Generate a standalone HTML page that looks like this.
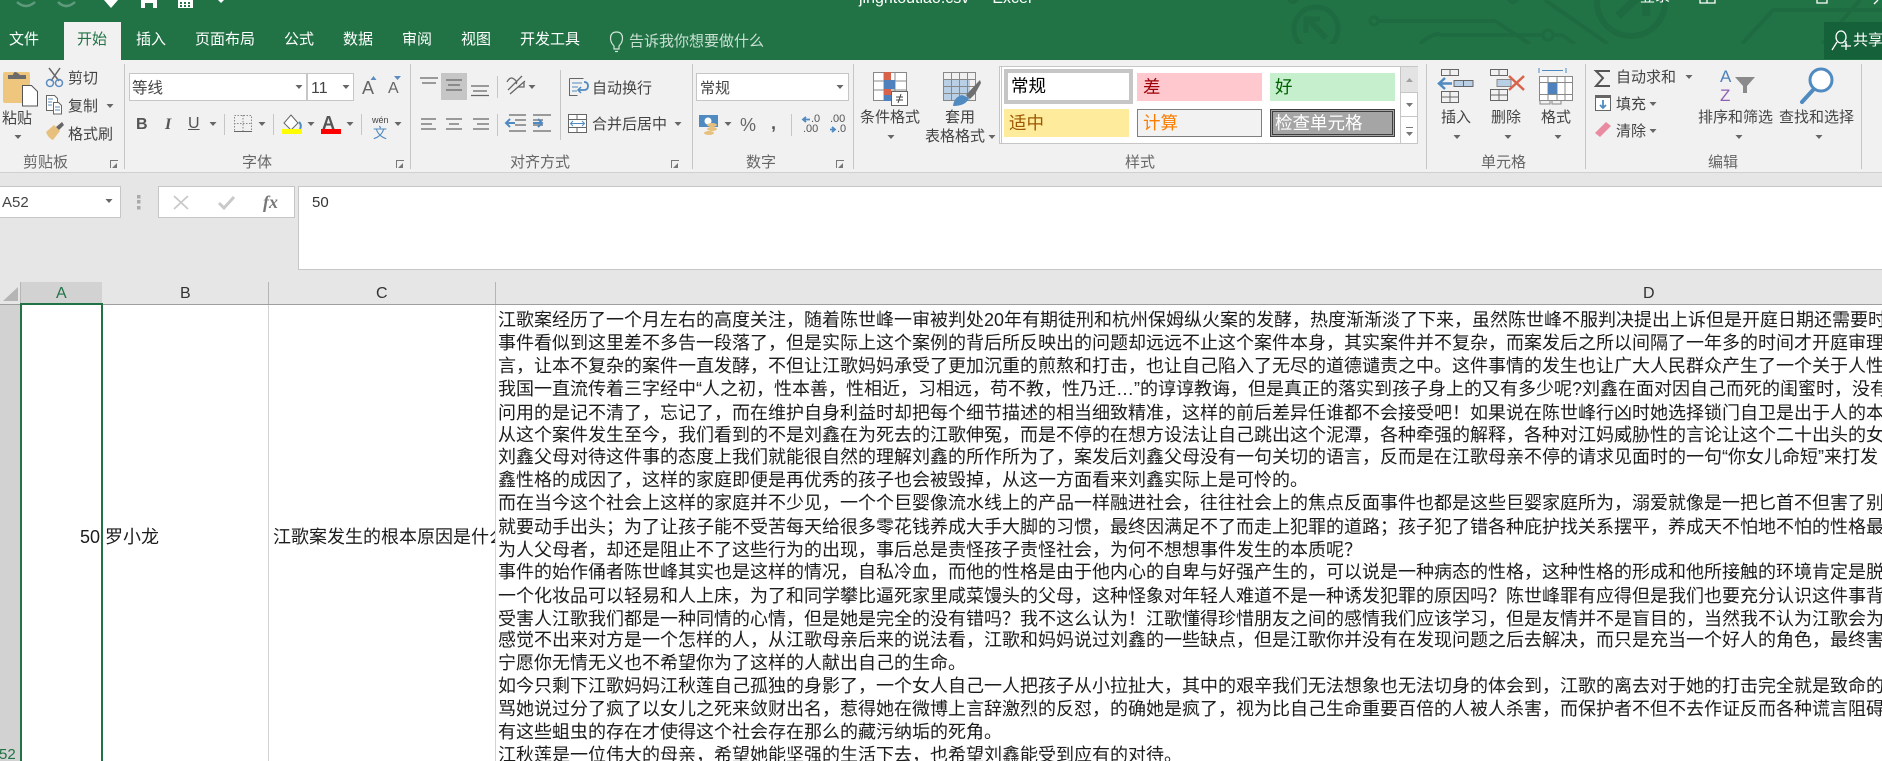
<!DOCTYPE html>
<html lang="zh"><head><meta charset="utf-8"><title>jingritoutiao.csv - Excel</title>
<style>
html,body{margin:0;padding:0;width:1882px;height:761px;overflow:hidden;background:#fff}
body{position:relative;font-family:"Liberation Sans","Noto Sans CJK SC",sans-serif}
div{position:absolute;box-sizing:border-box}
.t{white-space:nowrap;line-height:20px;height:20px;font-size:15px;color:#444}
.g{color:#666}
.tab{color:#fff;top:30px}
.l{left:498px;font-size:18px;line-height:23px;height:23px;white-space:nowrap;color:#1c1c1c;width:1384px;overflow:hidden}
.c{font-family:"Noto Sans CJK TC",sans-serif}
svg{position:absolute;left:0;top:0}
</style></head><body>
<div style="left:0;top:0;width:1882px;height:60px;background:#217346"></div>
<div style="left:64px;top:22px;width:57px;height:38px;background:#f1f1f1"></div>
<div style="left:0;top:60px;width:1882px;height:113px;background:#f1f1f1;border-bottom:1px solid #d0d0d0"></div>
<div style="left:0;top:173px;width:1882px;height:109px;background:#e6e6e6"></div>
<div style="left:0;top:282px;width:1882px;height:22px;background:#e6e6e6"></div>
<div style="left:21px;top:282px;width:81px;height:22px;background:#d2d2d2"></div>
<div style="left:0;top:305px;width:20px;height:456px;background:#d2d2d2"></div>
<div style="left:0;top:304px;width:1882px;height:1px;background:#9e9e9e"></div>

<div style="left:0;top:186px;width:121px;height:32px;background:#fff;border:1px solid #c6c6c6;border-left:0"></div>
<div style="left:158px;top:186px;width:137px;height:32px;background:#fff;border:1px solid #c6c6c6"></div>
<div style="left:298px;top:186px;width:1584px;height:84px;background:#fff;border:1px solid #c6c6c6;border-right:0"></div>

<div style="left:129px;top:73px;width:178px;height:28px;background:#fff;border:1px solid #c6c6c6"></div>
<div style="left:307px;top:73px;width:47px;height:28px;background:#fff;border:1px solid #c6c6c6"></div>
<div style="left:441px;top:73px;width:26px;height:27px;background:#c6c6c6"></div>
<div style="left:696px;top:73px;width:153px;height:28px;background:#fff;border:1px solid #c6c6c6"></div>

<div style="left:999px;top:66px;width:402px;height:78px;background:#fff;border:1px solid #c6c6c6"></div>
<div style="left:1001px;top:66px;width:417px;height:78px;border:1px solid #c6c6c6"></div>
<div style="left:1401px;top:67px;width:17px;height:25px;background:#e3e3e3"></div>
<div style="left:1401px;top:92px;width:17px;height:1px;background:#c6c6c6"></div>
<div style="left:1401px;top:116px;width:17px;height:1px;background:#c6c6c6"></div>
<div style="left:1401px;top:93px;width:16px;height:23px;background:#fff"></div>
<div style="left:1401px;top:117px;width:16px;height:26px;background:#fff"></div>

<div class="t" style="left:1004px;top:69px;width:129px;height:35px;background:#fff;border:4px solid #c6c6c6;font-size:17.5px;color:#000;line-height:27px;padding-left:3px">常规</div>
<div class="t" style="left:1137px;top:73px;width:125px;height:28px;background:#ffc7ce;font-size:17.5px;color:#9c0006;line-height:28px;padding-left:6px">差</div>
<div class="t" style="left:1270px;top:73px;width:125px;height:28px;background:#c6efce;font-size:17.5px;color:#006100;line-height:28px;padding-left:5px">好</div>
<div class="t" style="left:1004px;top:109px;width:125px;height:28px;background:#ffeb9c;font-size:17.5px;color:#9c5700;line-height:28px;padding-left:5px">适中</div>
<div class="t" style="left:1137px;top:109px;width:125px;height:28px;background:#f2f2f2;border:1px solid #7f7f7f;font-size:17.5px;color:#fa7d00;line-height:26px;padding-left:5px">计算</div>
<div class="t" style="left:1270px;top:109px;width:125px;height:28px;background:#a5a5a5;border:3px double #3f3f3f;font-size:17.5px;color:#fff;line-height:22px;padding-left:2px">检查单元格</div>

<svg width="1882" height="761" viewBox="0 0 1882 761" fill="none">
<!-- title bar pattern -->
<g stroke="#1e6b41" stroke-width="5" fill="none">
<circle cx="1316" cy="29" r="22"/>
<path d="M1309 20 L1326 38" stroke-width="6"/><path d="M1306 33 V19 H1320" stroke-width="5"/>
<circle cx="1374" cy="21" r="4" stroke-width="3"/><path d="M1378 21 H1495 L1530 44" stroke-width="4"/>
<path d="M1420 44 Q1430 34 1440 34" stroke-width="4"/>
<path d="M1440 35 H1543 M1553 35 H1562 L1575 44" stroke-width="3.5"/><circle cx="1548" cy="35" r="5" stroke-width="3"/>
<circle cx="1631" cy="2" r="34" stroke-width="6"/>
<path d="M1545 0 L1608 44" stroke-width="4"/><path d="M1618 16 L1648 -12" stroke-width="8"/><path d="M1646 16 V0" stroke-width="8"/>
<path d="M1742 44 L1773 10 H1882" stroke-width="4"/><path d="M1822 44 L1860 0" stroke-width="4"/>
<circle cx="1293" cy="-2" r="6" fill="#1e6b41" stroke="none"/><circle cx="1513" cy="-2" r="6" fill="#1e6b41" stroke="none"/>
</g>
<rect x="1000" y="44" width="824" height="16" fill="#217346"/>
<!-- QAT cut-off icons -->
<g>
<path d="M17 2 Q26 10 35 2" stroke="#5f9a7c" stroke-width="2.5"/>
<path d="M58 2 Q66 10 75 2" stroke="#5f9a7c" stroke-width="2.5"/>
<path d="M104 0 H118 L111 8z" fill="#fff"/>
<path d="M141 0 H157 V8 H141z" fill="#fff"/><rect x="145" y="3" width="8" height="5" fill="#217346"/>
<path d="M178 0 H193 V8 H178z" fill="#fff"/><path d="M180 2 h2 v2 h-2z M184 2 h2 v2 h-2z M188 2 h2 v2 h-2z M180 5 h2 v2 h-2z M184 5 h2 v2 h-2z M188 5 h2 v2 h-2z" fill="#217346"/>
<path d="M218 0 h6 l-3 3z" fill="#fff"/>
<path d="M1700 0 V3 H1715 V0 M1707 0 V3" stroke="#fff" stroke-width="1.3"/>
<path d="M1817 0 V3 H1827 V0" stroke="#fff" stroke-width="1.3"/>
<path d="M1874 4 L1878 0" stroke="#fff" stroke-width="1.3"/>
</g>
<!-- lightbulb -->
<g stroke="#d5e6dc" stroke-width="1.2"><path d="M614 46 C609 41 609 32 616.500 32 C624 32 624 41 619 46 V49 H614z"/><path d="M615 51.500 H618"/></g>
<!-- share icon -->
<rect x="1824" y="22" width="58" height="37" fill="#15613a"/>
<g stroke="#fff" stroke-width="1.3"><ellipse cx="1841" cy="37" rx="5" ry="6"/><path d="M1837 42 L1832 50 M1845 43 L1847 45 M1841 46 H1851 M1846 41 V50"/></g>
<!-- separators -->
<path d="M124.500 64V169M410.500 64V169M692.500 64V169M853.500 64V169M1426.500 64V169M1585.500 64V169M1861.500 64V169" stroke="#c6c6c6"/>
<path d="M224.500 114V135M273.500 114V135M361.500 114V135M497.500 76V98M497.500 114V136M560.500 70V140M791.500 114V136" stroke="#c6c6c6"/>
<!-- dropdown arrows -->
<path fill="#666" d="M14.500 135h7l-3.500 4zM106.500 104h7l-3.500 4zM295.500 85h7l-3.500 4zM342.500 85h7l-3.500 4zM209.500 122h7l-3.500 4zM258.500 122h7l-3.500 4zM307.500 122h7l-3.500 4zM346.500 122h7l-3.500 4zM394.500 122h7l-3.500 4zM528.500 85h7l-3.500 4zM674.500 122h7l-3.500 4zM836.500 85h7l-3.500 4zM724.500 122h7l-3.500 4zM887.500 135h7l-3.500 4zM988.500 135h7l-3.500 4zM1453.500 135h7l-3.500 4zM1504.500 135h7l-3.500 4zM1554.500 135h7l-3.500 4zM1685.500 75h7l-3.500 4zM1649.500 102h7l-3.500 4zM1649.500 129h7l-3.500 4zM1735.500 135h7l-3.500 4zM1815.500 135h7l-3.500 4zM105.500 199h7l-3.500 4z"/>
<path fill="#a0a0a0" d="M1406 82h7l-3.500-4z"/><path fill="#777" d="M1406 103h7l-3.500 4z"/><path fill="#777" d="M1406 132h7l-3.500 4zM1406 127h7v1h-7z"/>
<!-- launchers -->
<g stroke="#777"><path d="M110.500 168V160.500H118M396.500 168V160.500H404M671.500 168V160.500H679M836.500 168V160.500H844"/><path fill="#777" stroke="none" d="M117 168h-5l5-5z M403 168h-5l5-5z M678 168h-5l5-5z M843 168h-5l5-5z"/></g>
<!-- paste -->
<rect x="3" y="72" width="27" height="31" rx="2" fill="#efc67d"/>
<path d="M8 75 h5 q1-6 7 0 h6 v4 h-18z" fill="#6b6b6b"/>
<path d="M22.500 85.500 h9 l6 6 v14.500 h-15z" fill="#fff" stroke="#555"/>
<!-- scissors -->
<g stroke="#666" stroke-width="1.5"><path d="M49 68 L59 81 M60 68 L51 81"/></g>
<g stroke="#5b8bbf" stroke-width="1.5"><circle cx="50" cy="83" r="3.500"/><circle cx="59" cy="83" r="3.500"/></g>
<!-- copy -->
<g stroke="#666"><path d="M46.500 95.500h8l3 3v4h-4v8h-7z" fill="#fff"/><path d="M53.500 102.500h5l3 3v8.500h-8z" fill="#fff"/></g>
<path d="M48 99h5M48 102h4M48 105h4M55 107h5M55 110h5" stroke="#5b8bbf"/>
<!-- painter -->
<path d="M46 132 L54 125 L60 131 L53 140 Q48 138 46 132z" fill="#e8c07d"/><path d="M56 127 L62 122 L64 125 L59 130z" fill="#666"/>
<!-- font grow/shrink -->
<path d="M373.500 76 l3 4 h-6z" fill="#5b8bbf"/><path d="M394 76 h7 l-3.500 4z" fill="#5b8bbf"/>
<!-- borders -->
<path d="M234.500 115.500h17v16h-17zM243 115v17M234 123.500h18" stroke="#888" stroke-dasharray="1.500 1.500"/>
<path d="M234 131.500h18" stroke="#666"/>
<!-- fill colour -->
<path d="M291 115 l7 8 -7 7 -7-7z" fill="#fff" stroke="#666"/><path d="M299 122 q3 3 1 7" stroke="#4f8ac0" stroke-width="2"/>
<rect x="282" y="129" width="20" height="5" fill="#ff0"/>
<rect x="321" y="129" width="20" height="5" fill="#f00"/>
<!-- alignment -->
<g stroke="#666" stroke-width="1.200"><path d="M420 78h18M422 83h14M446 80h16M448 85h12M446 90h16M471 86h18M473 91h14M471 95.500h18"/>
<path d="M421 119h15M421 124h11M421 129h15M446 119h16M449 124h10M446 129h16M473 119h16M477 124h12M473 129h16"/>
<path d="M509 115h17M515 120h11M515 125h11M509 131h17M533 115h18M533 120h10M533 125h10M533 131h18"/></g>
<path d="M515 123h-8M510 119l-4 4 4 4M533 123h8M538 119l4 4-4 4" stroke="#4f8ac0" stroke-width="2"/>
<!-- orientation -->
<g stroke="#666" stroke-width="1.300"><path d="M508 90 L522 76M510 94 L525 81 M518 87 h6 v-5"/><path d="M507 82 q3-6 7-3 t2 5" /></g>
<!-- wrap -->
<g><path d="M569.500 78.500h14M569.500 78.500v17h8" stroke="#666"/><path d="M572 83h10M572 87h6M572 91h5" stroke="#4f8ac0"/><path d="M579 90h5q4 0 4-4t-4-4" stroke="#4f8ac0" stroke-width="1.800"/><path d="M581 87l-3 3 3 3" stroke="#4f8ac0" stroke-width="1.500"/></g>
<!-- merge -->
<g stroke="#666"><rect x="568.500" y="114.500" width="18" height="18" fill="#fff"/><path d="M568 119.500h18M568 127.500h18M577 115v4M577 128v4"/></g>
<path d="M571 123.500h13M573 121l-2.500 2.500 2.500 2.500M582 121l2.500 2.500-2.500 2.500" stroke="#4f8ac0"/>
<!-- currency -->
<rect x="699" y="115" width="19" height="12" fill="#4f8ac0"/><circle cx="708" cy="121" r="3.500" fill="#fff"/>
<g fill="#e8c07d"><ellipse cx="712" cy="125" rx="5" ry="2"/><ellipse cx="712" cy="129" rx="5" ry="2"/><ellipse cx="709" cy="133" rx="5" ry="2"/></g>
<path d="M810 119.500h-6M806 117l-3 2.500 3 2.500M830 129.500h5M832 127l3 2.500-3 2.500" stroke="#4f8ac0" stroke-width="1.800"/>
<!-- conditional -->
<g stroke="#888"><rect x="873.500" y="72.500" width="33" height="28" fill="#fff"/><path d="M884 72v28M895 72v28M873 81h34M873 90h34"/></g>
<rect x="884" y="72" width="7" height="9" fill="#d9634a"/><rect x="884" y="80" width="11" height="9" fill="#4f81bd"/><rect x="884" y="89" width="7" height="7" fill="#d9634a"/><rect x="884" y="95" width="7" height="6" fill="#4f81bd"/>
<rect x="891.500" y="91.500" width="16" height="14" fill="#fff" stroke="#666"/><path d="M896 97h7M896 100h7M901 94l-3 9" stroke="#444"/>
<!-- table format -->
<rect x="943" y="80" width="27" height="21" fill="#b8cfe6"/>
<g stroke="#888"><rect x="943.500" y="72.500" width="32" height="28"/><path d="M951.500 72v28M959.500 72v28M967.500 72v28M943 79.500h33M943 86.500h33M943 93.500h33"/></g>
<path d="M966 95 L978 82 L980 80 L981 83 L975 94 L970 99z" fill="#6f6f6f"/><path d="M953 106 Q954 97 962 95 L969 98 Q966 106 953 106z" fill="#4f8ac0"/>
<!-- insert -->
<g stroke="#666"><path d="M1441.500 69.500h17v6h-17zM1450 70v6M1441.500 91.500h17v11h-17zM1450 92v11M1441 97h18"/><rect x="1454" y="80.500" width="19" height="6" fill="#b8cfe6"/><path d="M1463.500 80v7"/></g>
<path d="M1452 83.500h-13M1445 78l-6 5.500 6 5.500" stroke="#4f8ac0" stroke-width="2.500"/>
<!-- delete -->
<g stroke="#666"><path d="M1490.500 69.500h17v6h-17zM1499 70v6M1490.500 89.500h17v11h-17zM1499 90v11M1490 95h18"/></g><rect x="1497" y="79.500" width="14" height="7" fill="#b8cfe6" stroke="#888"/>
<path d="M1509 76 L1524 90 M1524 76 L1509 90" stroke="#d9634a" stroke-width="2.500"/>
<!-- format -->
<path d="M1539 68v5M1566 68v5M1542 70.500h21" stroke="#4f8ac0"/>
<g stroke="#888"><rect x="1539.500" y="76.500" width="33" height="24" fill="#fff"/><path d="M1548 76v25M1557 76v25M1565 76v25M1539 82.500h34M1539 94.500h34"/></g><rect x="1548" y="83" width="9" height="11" fill="#4f81bd"/>
<path d="M1540 101v3h10v-3M1552 101v3h9v-3" stroke="#888"/>
<!-- sigma -->
<path d="M1610 71 H1596 L1603 78 L1596 86 H1610" stroke="#555" stroke-width="2"/>
<!-- fill -->
<rect x="1595.500" y="95.500" width="15" height="15" fill="#fff" stroke="#666"/><path d="M1596 96h14v2h-14z" fill="#666"/><path d="M1603 100v8M1600 105l3 3 3-3" stroke="#4f8ac0" stroke-width="1.800"/>
<!-- eraser -->
<path d="M1595 133 L1606 122 L1611 126 L1600 137z" fill="#e98ca1"/>
<!-- sort funnel -->
<path d="M1735 77 H1755 L1747 86 V93 H1743 V86z" fill="#8a8a8a"/>
<!-- find -->
<circle cx="1821" cy="80" r="11" fill="#fff" stroke="#4f8ac0" stroke-width="3"/><path d="M1813 90 L1802 102" stroke="#4f8ac0" stroke-width="4" stroke-linecap="round"/>
<!-- formula bar -->
<rect x="137" y="195" width="3.500" height="3.500" fill="#aaa"/><rect x="137" y="200" width="3.500" height="3.500" fill="#aaa"/><rect x="137" y="206" width="3.500" height="3.500" fill="#aaa"/>
<path d="M174 196 L188 209 M188 196 L174 209" stroke="#c9c9c9" stroke-width="1.800"/>
<path d="M219 203 L224 208 L234 197" stroke="#c9c9c9" stroke-width="3"/>
<!-- select-all triangle -->
<path d="M18 287 V301 H3z" fill="#b5b5b5"/>
<!-- grid -->
<path d="M268.500 282V304M495.500 282V304M20.500 282V304" stroke="#b5b5b5"/>
<path d="M268.500 305V761M495.500 305V761" stroke="#d4d4d4"/>
<rect x="21" y="304" width="81" height="470" stroke="#217346" stroke-width="2" fill="none"/>
</svg>

<!-- top clipped text -->
<div class="t" style="left:859px;top:-11px;color:#fff;font-size:16px">jingritoutiao.csv &nbsp;-&nbsp; Excel</div>
<div class="t" style="left:1640px;top:-13px;color:#fff">登录</div>

<!-- tabs -->
<div class="t tab" style="left:9px">文件</div>
<div class="t" style="left:77px;top:30px;color:#217346">开始</div>
<div class="t tab" style="left:136px">插入</div>
<div class="t tab" style="left:195px">页面布局</div>
<div class="t tab" style="left:284px">公式</div>
<div class="t tab" style="left:343px">数据</div>
<div class="t tab" style="left:402px">审阅</div>
<div class="t tab" style="left:461px">视图</div>
<div class="t tab" style="left:520px">开发工具</div>
<div class="t" style="left:629px;top:32px;color:#c9e0d3">告诉我你想要做什么</div>
<div class="t" style="left:1853px;top:31px;color:#fff">共享</div>

<div style="left:0;top:1px;width:0;height:0">
<!-- clipboard -->
<div class="t" style="left:2px;top:108px">粘贴</div>
<div class="t" style="left:68px;top:68px">剪切</div>
<div class="t" style="left:68px;top:96px">复制</div>
<div class="t" style="left:68px;top:124px">格式刷</div>
<!-- font -->
<div class="t" style="left:132px;top:78px;font-size:15.500px">等线</div>
<div class="t" style="left:311px;top:78px;font-size:16px">11</div>
<div class="t" style="left:362px;top:77px;font-size:18px;color:#666">A</div>
<div class="t" style="left:388px;top:78px;font-size:16px;color:#666">A</div>
<div class="t" style="left:136px;top:114px;font-weight:bold;font-size:16px;color:#555">B</div>
<div class="t" style="left:165px;top:114px;font-style:italic;font-size:16px;color:#555;font-family:'Liberation Serif',serif;font-weight:bold">I</div>
<div class="t" style="left:188px;top:113px;font-size:16px;color:#555;text-decoration:underline">U</div>
<div class="t" style="left:322px;top:112px;font-size:18px;font-weight:bold;color:#555">A</div>
<div class="t" style="left:372px;top:109px;font-size:9px;color:#444">wén</div>
<div class="t" style="left:373px;top:122px;font-size:14px;color:#4f8ac0">文</div>
<!-- align -->
<div class="t" style="left:592px;top:78px">自动换行</div>
<div class="t" style="left:592px;top:114px">合并后居中</div>
<!-- number -->
<div class="t" style="left:700px;top:78px">常规</div>
<div class="t" style="left:740px;top:114px;font-size:18px;color:#666">%</div>
<div class="t" style="left:771px;top:112px;font-size:18px;font-weight:bold;color:#555">,</div>
<div class="t" style="left:811px;top:108px;font-size:11px;color:#555">.0</div>
<div class="t" style="left:803px;top:118px;font-size:11px;color:#555">.00</div>
<div class="t" style="left:830px;top:108px;font-size:11px;color:#555">.00</div>
<div class="t" style="left:837px;top:118px;font-size:11px;color:#555">.0</div>
<!-- styles -->
<div class="t" style="left:860px;top:107px">条件格式</div>
<div class="t" style="left:945px;top:107px">套用</div>
<div class="t" style="left:925px;top:126px">表格格式</div>
<!-- cells -->
<div class="t" style="left:1441px;top:107px">插入</div>
<div class="t" style="left:1491px;top:107px">删除</div>
<div class="t" style="left:1541px;top:107px">格式</div>
<!-- edit -->
<div class="t" style="left:1616px;top:67px">自动求和</div>
<div class="t" style="left:1616px;top:94px">填充</div>
<div class="t" style="left:1616px;top:121px">清除</div>
<div class="t" style="left:1720px;top:66px;font-size:17px;color:#4f81bd">A</div>
<div class="t" style="left:1720px;top:85px;font-size:17px;color:#8e5fb5">Z</div>
<div class="t" style="left:1698px;top:107px">排序和筛选</div>
<div class="t" style="left:1779px;top:107px">查找和选择</div>
<!-- group labels -->
<div class="t g" style="left:23px;top:152px">剪贴板</div>
<div class="t g" style="left:242px;top:152px">字体</div>
<div class="t g" style="left:510px;top:152px">对齐方式</div>
<div class="t g" style="left:746px;top:152px">数字</div>
<div class="t g" style="left:1125px;top:152px">样式</div>
<div class="t g" style="left:1481px;top:152px">单元格</div>
<div class="t g" style="left:1708px;top:152px">编辑</div>
<!-- formula -->
<div class="t" style="left:2px;top:192px;color:#444">A52</div>
<div class="t" style="left:263px;top:191px;font-family:'Liberation Serif',serif;font-style:italic;font-weight:bold;font-size:18px;color:#777">fx</div>
<div class="t" style="left:312px;top:192px;color:#333">50</div>
</div>
<!-- headers -->
<div class="t" style="left:56px;top:284px;font-size:16px;color:#217346">A</div>
<div class="t" style="left:180px;top:284px;font-size:16px;color:#333">B</div>
<div class="t" style="left:376px;top:284px;font-size:16px;color:#333">C</div>
<div class="t" style="left:1643px;top:284px;font-size:16px;color:#333">D</div>
<div class="t" style="left:-1px;top:745px;font-size:15px;color:#217346">52</div>
<!-- cells -->
<div class="t" style="left:80px;top:527px;font-size:18px;color:#1c1c1c">50</div>
<div class="t" style="left:105px;top:527px;font-size:18px;color:#1c1c1c">罗小龙</div>
<div class="t" style="left:273px;top:527px;width:222px;overflow:hidden;font-size:18px;color:#1c1c1c">江歌案发生的根本原因是什么</div>

<div style="left:0;top:3px;width:0;height:0">
<div class="l" style="top:306px">江歌案经历了一个月左右的高度关注，随着陈世峰一审被判处20年有期徒刑和杭州保姆纵火案的发酵，热度渐渐淡了下来，虽然陈世峰不服判决提出上诉但是开庭日期还需要时间</div>
<div class="l" style="top:329px">事件看似到这里差不多告一段落了，但是实际上这个案例的背后所反映出的问题却远远不止这个案件本身，其实案件并不复杂，而案发后之所以间隔了一年多的时间才开庭审理</div>
<div class="l" style="top:352px">言，让本不复杂的案件一直发酵，不但让江歌妈妈承受了更加沉重的煎熬和打击，也让自己陷入了无尽的道德谴责之中。这件事情的发生也让广大人民群众产生了一个关于人性</div>
<div class="l" style="top:375px">我国一直流传着三字经中“人之初，性本善，性相近，习相远，苟不教，性乃迁…”的谆谆教诲，但是真正的落实到孩子身上的又有多少呢?刘鑫在面对因自己而死的闺蜜时，没有</div>
<div class="l" style="top:398px">问用的是记不清了，忘记了，而在维护自身利益时却把每个细节描述的相当细致精准，这样的前后差异任谁都不会接受吧<span class="c">！</span>如果说在陈世峰行凶时她选择锁门自卫是出于人的本</div>
<div class="l" style="top:421px">从这个案件发生至今，我们看到的不是刘鑫在为死去的江歌伸冤，而是不停的在想方设法让自己跳出这个泥潭，各种牵强的解释，各种对江妈威胁性的言论让这个二十出头的女</div>
<div class="l" style="top:443px">刘鑫父母对待这件事的态度上我们就能很自然的理解刘鑫的所作所为了，案发后刘鑫父母没有一句关切的语言，反而是在江歌母亲不停的请求见面时的一句“你女儿命短”来打发</div>
<div class="l" style="top:466px">鑫性格的成因了，这样的家庭即便是再优秀的孩子也会被毁掉，从这一方面看来刘鑫实际上是可怜的。</div>
<div class="l" style="top:489px">而在当今这个社会上这样的家庭并不少见，一个个巨婴像流水线上的产品一样融进社会，往往社会上的焦点反面事件也都是这些巨婴家庭所为，溺爱就像是一把匕首不但害了别</div>
<div class="l" style="top:512px">就要动手出头<span class="c">；</span>为了让孩子能不受苦每天给很多零花钱养成大手大脚的习惯，最终因满足不了而走上犯罪的道路<span class="c">；</span>孩子犯了错各种庇护找关系摆平，养成天不怕地不怕的性格最</div>
<div class="l" style="top:535px">为人父母者，却还是阻止不了这些行为的出现，事后总是责怪孩子责怪社会，为何不想想事件发生的本质呢<span class="c">？</span></div>
<div class="l" style="top:558px">事件的始作俑者陈世峰其实也是这样的情况，自私冷血，而他的性格是由于他内心的自卑与好强产生的，可以说是一种病态的性格，这种性格的形成和他所接触的环境肯定是脱</div>
<div class="l" style="top:581px">一个化妆品可以轻易和人上床，为了和同学攀比逼死家里咸菜馒头的父母，这种怪象对年轻人难道不是一种诱发犯罪的原因吗<span class="c">？</span>陈世峰罪有应得但是我们也要充分认识这件事背</div>
<div class="l" style="top:604px">受害人江歌我们都是一种同情的心情，但是她是完全的没有错吗<span class="c">？</span>我不这么认为<span class="c">！</span>江歌懂得珍惜朋友之间的感情我们应该学习，但是友情并不是盲目的，当然我不认为江歌会为</div>
<div class="l" style="top:626px">感觉不出来对方是一个怎样的人，从江歌母亲后来的说法看，江歌和妈妈说过刘鑫的一些缺点，但是江歌你并没有在发现问题之后去解决，而只是充当一个好人的角色，最终害</div>
<div class="l" style="top:649px">宁愿你无情无义也不希望你为了这样的人献出自己的生命。</div>
<div class="l" style="top:672px">如今只剩下江歌妈妈江秋莲自己孤独的身影了，一个女人自己一人把孩子从小拉扯大，其中的艰辛我们无法想象也无法切身的体会到，江歌的离去对于她的打击完全就是致命的</div>
<div class="l" style="top:695px">骂她说过分了疯了以女儿之死来敛财出名，惹得她在微博上言辞激烈的反怼，的确她是疯了，视为比自己生命重要百倍的人被人杀害，而保护者不但不去作证反而各种谎言阻碍</div>
<div class="l" style="top:718px">有这些蛆虫的存在才使得这个社会存在那么的藏污纳垢的死角。</div>
<div class="l" style="top:741px">江秋莲是一位伟大的母亲，希望她能坚强的生活下去，也希望刘鑫能受到应有的对待。</div>
</div>
</body></html>
